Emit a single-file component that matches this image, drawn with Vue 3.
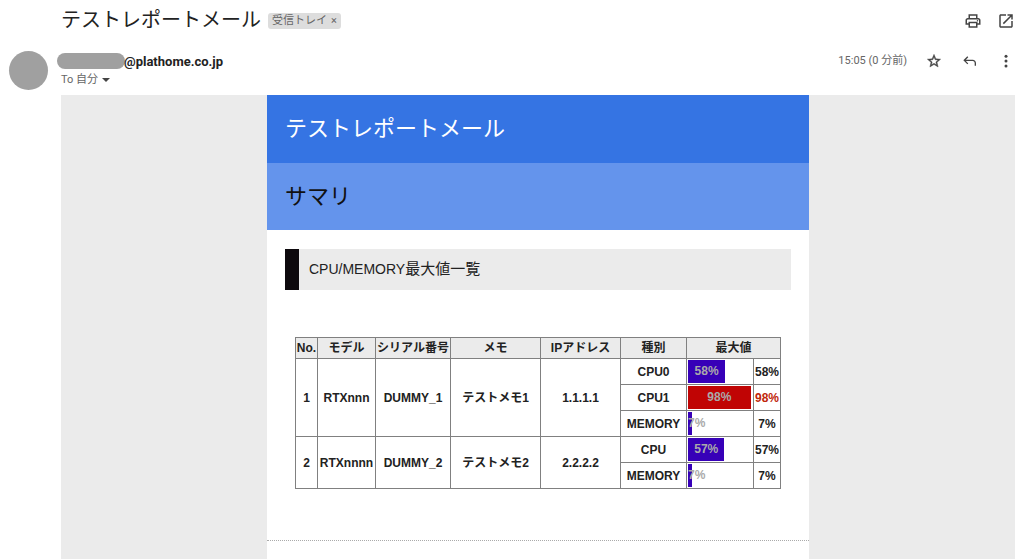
<script setup>
const devices = [
  {
    no: 1,
    model: 'RTXnnn',
    serial: 'DUMMY_1',
    memo: 'テストメモ1',
    ip: '1.1.1.1',
    metrics: [
      { kind: 'CPU0', value: 58 },
      { kind: 'CPU1', value: 98 },
      { kind: 'MEMORY', value: 7 },
    ],
  },
  {
    no: 2,
    model: 'RTXnnnn',
    serial: 'DUMMY_2',
    memo: 'テストメモ2',
    ip: '2.2.2.2',
    metrics: [
      { kind: 'CPU', value: 57 },
      { kind: 'MEMORY', value: 7 },
    ],
  },
]

const rows = devices.flatMap((device) =>
  device.metrics.map((metric, index) => ({ device, metric, first: index === 0 })),
)
const isHigh = (value) => value >= 90
</script>

<template>
  <div class="page">
    <header class="subject">
      <h1>テストレポートメール</h1>
      <span class="chip">受信トレイ<button type="button" aria-label="ラベルを削除">×</button></span>
      <div class="subject-actions">
        <button type="button" class="icon" aria-label="印刷">
          <svg viewBox="0 0 24 24" width="18" height="18"><path d="M19 8h-1V3H6v5H5c-1.660 0-3 1.340-3 3v6h4v4h12v-4h4v-6c0-1.660-1.340-3-3-3zM8 5h8v3H8V5zm8 12v2H8v-4h8v2zm2-2v-2H6v2H4v-4c0-.55.45-1 1-1h14c.55 0 1 .45 1 1v4h-2z" /><circle cx="18" cy="11.500" r="1" /></svg>
        </button>
        <button type="button" class="icon" aria-label="新しいウィンドウで開く">
          <svg viewBox="0 0 24 24" width="18" height="18"><path d="M19 19H5V5h7V3H5c-1.110 0-2 .9-2 2v14c0 1.100.89 2 2 2h14c1.100 0 2-.9 2-2v-7h-2v7zM14 3v2h3.590l-9.830 9.830 1.410 1.410L19 6.410V10h2V3h-7z" /></svg>
        </button>
      </div>
    </header>

    <section class="sender">
      <div class="avatar"></div>
      <div class="who">
        <div class="address"><span class="mask"></span>@plathome.co.jp</div>
        <button type="button" class="recipient">To 自分<span class="caret"></span></button>
      </div>
      <div class="meta">
        <time>15:05 (0 分前)</time>
        <button type="button" class="icon bold" aria-label="スター">
          <svg viewBox="0 0 24 24" width="16" height="16"><path d="M22 9.240l-7.190-.62L12 2 9.190 8.630 2 9.240l5.460 4.730L5.820 21 12 17.270 18.180 21l-1.630-7.030L22 9.240zM12 15.400l-3.760 2.270 1-4.280-3.320-2.880 4.380-.38L12 6.100l1.710 4.040 4.380.38-3.320 2.880 1 4.280L12 15.400z" /></svg>
        </button>
        <button type="button" class="icon" aria-label="返信">
          <svg viewBox="0 0 24 24" width="16" height="16"><path d="M19 19v-4c0-1.660-1.340-3-3-3H5.830l3.580 3.590L8 17l-6-6 6-6 1.410 1.410L5.830 10H16c2.760 0 5 2.240 5 5v4h-2z" /></svg>
        </button>
        <button type="button" class="icon" aria-label="その他">
          <svg viewBox="0 0 24 24" width="18" height="18"><circle cx="12" cy="5.500" r="2" /><circle cx="12" cy="12" r="2" /><circle cx="12" cy="18.500" r="2" /></svg>
        </button>
      </div>
    </section>

    <main class="mail">
      <article class="report">
        <h2 class="report-title">テストレポートメール</h2>
        <h3 class="report-section">サマリ</h3>
        <div class="summary">
          <h4><span class="latin">CPU/MEMORY</span>最大値一覧</h4>
          <table>
            <colgroup>
              <col class="c-no" />
              <col class="c-model" />
              <col class="c-serial" />
              <col class="c-memo" />
              <col class="c-ip" />
              <col class="c-kind" />
              <col class="c-bar" />
              <col class="c-value" />
            </colgroup>
            <thead>
              <tr>
                <th>No.</th>
                <th>モデル</th>
                <th>シリアル番号</th>
                <th>メモ</th>
                <th>IPアドレス</th>
                <th>種別</th>
                <th colspan="2">最大値</th>
              </tr>
            </thead>
            <tbody>
              <tr v-for="row in rows" :key="row.device.no + row.metric.kind">
                <template v-if="row.first">
                  <td :rowspan="row.device.metrics.length">{{ row.device.no }}</td>
                  <td :rowspan="row.device.metrics.length">{{ row.device.model }}</td>
                  <td :rowspan="row.device.metrics.length">{{ row.device.serial }}</td>
                  <td :rowspan="row.device.metrics.length">{{ row.device.memo }}</td>
                  <td :rowspan="row.device.metrics.length">{{ row.device.ip }}</td>
                </template>
                <td>{{ row.metric.kind }}</td>
                <td class="bar-cell">
                  <div
                    class="bar"
                    :class="{ high: isHigh(row.metric.value) }"
                    :style="{ width: row.metric.value + '%' }"
                  >{{ row.metric.value }}%</div>
                </td>
                <td :class="{ alert: isHigh(row.metric.value) }">{{ row.metric.value }}%</td>
              </tr>
            </tbody>
          </table>
        </div>
        <hr />
      </article>
    </main>
  </div>
</template>

<style>
body {
  margin: 0;
  background: #fff;
}
</style>

<style scoped>
.page {
  display: flex;
  flex-direction: column;
  min-height: 100vh;
  font-family: Roboto, "Noto Sans CJK JP", sans-serif;
  color: #222;
}
h1,
h2,
h3,
h4 {
  margin: 0;
  font-weight: 400;
}
button {
  padding: 0;
  border: 0;
  background: none;
  font: inherit;
  color: inherit;
  cursor: pointer;
}
.icon {
  display: flex;
  align-items: center;
  justify-content: center;
  width: 18px;
  height: 18px;
  color: #444;
}
.icon svg {
  fill: currentColor;
}
.icon.bold svg {
  overflow: visible;
  stroke: currentColor;
  stroke-width: 0.6;
}
.subject {
  display: flex;
  align-items: center;
  height: 42px;
  padding: 0 9px 0 61px;
}
h1 {
  font-size: 20px;
  line-height: 28px;
  margin-top: -2px;
}
.chip {
  display: flex;
  align-items: center;
  gap: 4px;
  height: 16px;
  margin-left: 7px;
  padding: 0 4px;
  border-radius: 3px;
  background: #ddd;
  color: #666;
  font-size: 11px;
  line-height: 16px;
}
.subject-actions {
  display: flex;
  gap: 15px;
  margin-left: auto;
}
.sender {
  display: flex;
  align-items: flex-start;
  height: 45px;
  padding: 8px 9px 0;
}
.avatar {
  width: 39px;
  height: 39px;
  margin-top: 1px;
  border-radius: 50%;
  background: #a0a0a0;
}
.who {
  margin-left: 9px;
}
.address {
  display: flex;
  align-items: center;
  height: 22px;
  font-size: 13px;
  font-weight: 700;
}
.mask {
  width: 68px;
  height: 16px;
  margin-right: -1px;
  border-radius: 8px;
  background: #a0a0a0;
}
.recipient {
  display: flex;
  align-items: center;
  gap: 4px;
  margin-left: 4px;
  color: #666;
  font-size: 11px;
  line-height: 15px;
}
.caret {
  border: 4px solid transparent;
  border-top-color: #444;
  border-bottom: 0;
}
.meta {
  display: flex;
  align-items: center;
  gap: 18px;
  height: 22px;
  margin-left: auto;
}
time {
  color: #666;
  font-size: 11px;
  line-height: 16px;
}
.mail {
  display: flex;
  flex: 1;
  justify-content: center;
  margin: 0 9px 0 61px;
  background: #ebebeb;
}
.report {
  width: 100%;
  max-width: 542px;
  background: #fff;
  font-family: "Liberation Sans", "Noto Sans CJK JP", sans-serif;
}
.report-title,
.report-section {
  padding: 0 18px;
  font-size: 22px;
}
.report-title {
  background: #3574e3;
  color: #fff;
  line-height: 68px;
}
.report-section {
  background: #6494ec;
  color: #111;
  line-height: 67px;
}
.summary {
  padding: 19px 18px 51px;
}
h4 {
  padding: 0 0 1px 10px;
  border-left: 14px solid #0d090d;
  background: #ebebeb;
  font-size: 15px;
  line-height: 40px;
}
.latin {
  font-size: 14px;
}
table {
  width: 485px;
  max-width: 100%;
  margin: 47px 0 0 10px;
  border-collapse: collapse;
  table-layout: fixed;
  font-size: 12px;
  font-weight: 700;
  line-height: 16px;
  text-align: center;
}
.c-no { width: 22px; }
.c-model { width: 58px; }
.c-serial { width: 75px; }
.c-memo { width: 90px; }
.c-ip { width: 80px; }
.c-kind { width: 66px; }
.c-bar { width: 67px; }
.c-value { width: 27px; }
th,
td {
  box-sizing: border-box;
  padding: 0;
  border: 1px solid #808080;
  white-space: nowrap;
}
th {
  height: 21px;
  background: #ebebeb;
}
td {
  height: 26px;
}
.bar-cell {
  padding: 1px;
}
.bar {
  height: 23px;
  background: #3700b8;
  color: #aaa;
  line-height: 22px;
}
.high {
  background: #c00404;
}
.alert {
  color: #c0260a;
}
hr {
  margin: 0;
  border: 0;
  border-top: 1px dotted #aaa;
}
</style>
